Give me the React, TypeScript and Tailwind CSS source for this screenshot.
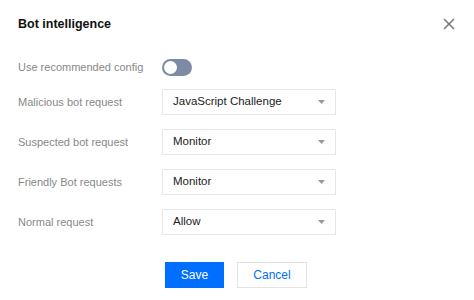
import React from "react";

// ─── Data ────────────────────────────────────────────────────────────────────

const ROWS = [
  { label: "Malicious bot request", value: "JavaScript Challenge" },
  { label: "Suspected bot request", value: "Monitor" },
  { label: "Friendly Bot requests", value: "Monitor" },
  { label: "Normal request", value: "Allow" },
];

const FONT = { fontFamily: '"Liberation Sans", Arial, sans-serif' };

// ─── Pieces ──────────────────────────────────────────────────────────────────

function Select({ value }: { value: string }) {
  return (
    <div className="flex h-[26px] w-[174px] items-center justify-between border border-[#e6e6e6] bg-white pl-[10px] pr-[9px] text-[11.5px] text-[#222]">
      <span>{value}</span>
      <svg width="7" height="4" viewBox="0 0 7 4" className="mr-[1px]">
        <path d="M0 0h7L3.5 4z" fill="#999" />
      </svg>
    </div>
  );
}

function Toggle() {
  return (
    <div className="flex h-[17px] w-[30px] items-center rounded-full bg-[#7d8aa3] px-[2px]">
      <div className="h-[13px] w-[13px] rounded-full bg-white" />
    </div>
  );
}

// ─── App ─────────────────────────────────────────────────────────────────────

export default function App() {
  return (
    <div className="h-[300px] w-[474px] bg-white pl-[18px] pr-[18px] pt-[2px]" style={FONT}>
      {/* Header */}
      <div className="flex h-[46px] items-center justify-between pb-[2px]">
        <h1 className="text-[12.5px] font-bold text-[#111]">Bot intelligence</h1>
        <svg width="12" height="12" viewBox="0 0 12 12" className="mr-[1px]">
          <path d="M1 1l10 10M11 1L1 11" stroke="#777" strokeWidth="1.5" />
        </svg>
      </div>

      {/* Form */}
      <div className="flex h-[38px] items-center">
        <span className="w-[144px] text-[11px] text-[#888]">Use recommended config</span>
        <Toggle />
      </div>
      <div className="mt-[3px] flex flex-col gap-[14px]">
        {ROWS.map((row) => (
          <div key={row.label} className="flex items-center">
            <span className="w-[144px] text-[11px] text-[#888]">{row.label}</span>
            <Select value={row.value} />
          </div>
        ))}
      </div>

      {/* Actions */}
      <div className="mt-[27px] flex gap-[13px] pl-[147px]">
        <button className="h-[26px] w-[59px] bg-[#006eff] text-[12px] text-white">Save</button>
        <button className="h-[26px] w-[70px] border border-[#e3e3e3] bg-white text-[12px] text-[#006eff]">
          Cancel
        </button>
      </div>
    </div>
  );
}
